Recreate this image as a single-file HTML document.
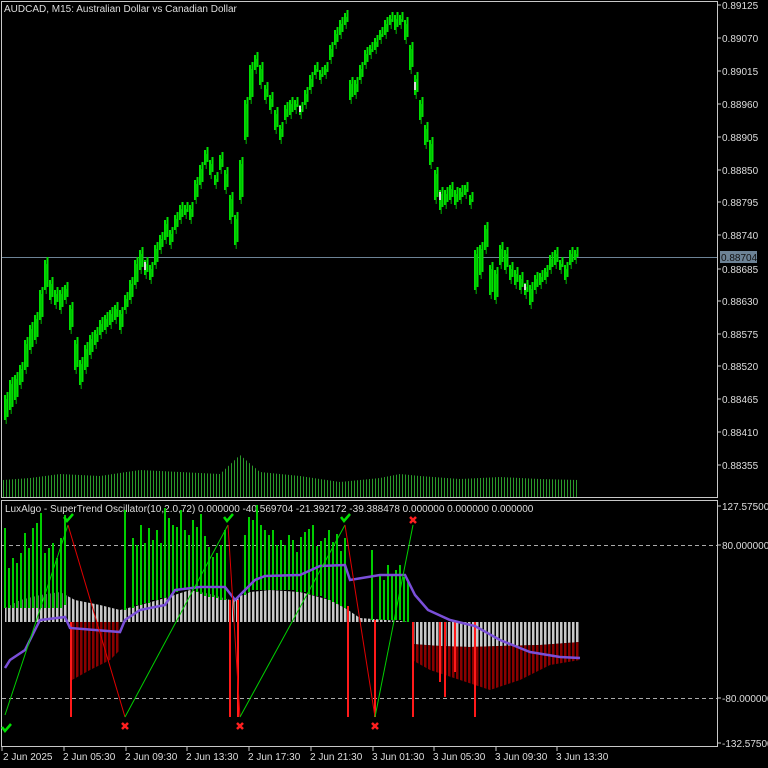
<!DOCTYPE html><html><head><style>body{margin:0;background:#000;width:768px;height:768px;overflow:hidden}svg{display:block}text{font-family:"Liberation Sans",sans-serif;font-size:10px;fill:#ddd}</style></head><body>
<svg width="768" height="768" viewBox="0 0 768 768">
<defs>
<pattern id="gs" width="4" height="10" patternUnits="userSpaceOnUse"><rect x="0" width="2.5" height="10" fill="#c8c8c8"/></pattern>
<pattern id="rs" width="4" height="10" patternUnits="userSpaceOnUse"><rect x="0" width="2.5" height="10" fill="#8b0000"/></pattern>
<pattern id="vs" width="3" height="10" patternUnits="userSpaceOnUse"><rect x="0" width="1" height="10" fill="#2a9a2a"/></pattern>
</defs>
<rect x="0" y="0" width="768" height="768" fill="#000"/>
<path d="M1.5 1.5H717.5V497.5H1.5Z M1.5 500.5H717.5V746.5H1.5Z" fill="none" stroke="#c8c8c8"/>
<line x1="2" y1="257.5" x2="717" y2="257.5" stroke="#6d8396"/>
<g stroke="#c8c8c8">
<path d="M717 5h4M717 38h4M717 71h4M717 104h4M717 137h4M717 170h4M717 202h4M717 235h4M717 269h4M717 301h4M717 334h4M717 366h4M717 399h4M717 432h4M717 465h4M717 506h4M717 545h4M717 698h4M717 743h4"/>
<path d="M2 747v4M64 747v4M126 747v4M187 747v4M249 747v4M311 747v4M373 747v4M434 747v4M496 747v4M557 747v4"/>
</g>
<g>
<text x="722" y="9">0.89125</text><text x="722" y="42">0.89070</text><text x="722" y="75">0.89015</text><text x="722" y="108">0.88960</text><text x="722" y="141">0.88905</text><text x="722" y="174">0.88850</text><text x="722" y="206">0.88795</text><text x="722" y="239">0.88740</text><text x="722" y="273">0.88685</text><text x="722" y="305">0.88630</text><text x="722" y="338">0.88575</text><text x="722" y="370">0.88520</text><text x="722" y="403">0.88465</text><text x="722" y="436">0.88410</text><text x="722" y="469">0.88355</text>
<text x="722" y="510">127.575000</text><text x="722" y="549">80.000000</text><text x="722" y="702">-80.000000</text><text x="722" y="747">-132.575000</text>
</g>
<rect x="720" y="251" width="37" height="12" fill="#6d8396"/><text x="721" y="261" style="fill:#111">0.88704</text>
<text x="4" y="12">AUDCAD, M15:  Australian Dollar vs Canadian Dollar</text>
<text x="5" y="512">LuxAlgo - SuperTrend Oscillator(10,2.0,72) 0.000000 -40.569704 -21.392172 -39.388478 0.000000 0.000000 0.000000</text>
<g><text x="3" y="760">2 Jun 2025</text><text x="63" y="760">2 Jun 05:30</text><text x="125" y="760">2 Jun 09:30</text><text x="186" y="760">2 Jun 13:30</text><text x="248" y="760">2 Jun 17:30</text><text x="310" y="760">2 Jun 21:30</text><text x="372" y="760">3 Jun 01:30</text><text x="433" y="760">3 Jun 05:30</text><text x="495" y="760">3 Jun 09:30</text><text x="556" y="760">3 Jun 13:30</text></g>
<path d="M3 497V480 L30 478 L60 474 L100 476 L140 470 L180 472 L220 474 L240 455 L260 472 L300 476 L340 482 L380 478 L400 474 L420 476 L460 479 L500 477 L540 479 L578 480 V497Z" fill="url(#vs)"/>
<g id="cg" stroke="#00e000" stroke-width="2" fill="none">
<path id="cp" d="M5 420v-25M10 410v-30M15 400v-25M20 385v-20M25 370v-30M30 350v-25M35 340v-25M40 320v-30M45 290v-30M50 300v-20M55 305v-15M60 310v-20M65 300v-15M70 330v-25M75 370v-30M80 385v-25M85 370v-25M90 355v-20M95 345v-15M100 335v-15M105 330v-15M110 325v-15M115 320v-15M120 330v-20M125 310v-15M130 300v-20M135 285v-25M140 270v-20M145 275v-15M150 280v-15M155 265v-20M160 250v-15M165 240v-20M170 245v-15M175 230v-15M180 220v-15M185 215v-10M190 220v-15M195 200v-20M200 185v-20M205 165v-15M210 175v-15M215 185v-10M220 170v-15M225 190v-20M230 220v-25M235 245v-30M240 200v-40M245 140v-40M250 100v-35M255 70v-15M260 85v-20M265 100v-15M270 110v-15M275 130v-20M280 140v-15M285 120v-15M290 115v-15M295 110v-10M300 115v-10M305 105v-15M310 90v-15M315 75v-10M320 80v-10M325 75v-10M330 60v-15M335 45v-15M340 35v-15M345 25v-12M350 100v-20M355 95v-15M360 80v-15M365 65v-15M370 55v-10M375 50v-12M380 40v-10M385 35v-15M390 25v-10M395 30v-15M400 25v-10M405 40v-20M410 70v-25M415 95v-20M420 120v-20M425 145v-20M430 165v-25M435 200v-30M440 210v-20M445 205v-15M450 200v-15M455 205v-15M460 200v-12M465 195v-10M470 205v-10M475 290v-40M480 275v-30M485 250v-25M490 295v-30M495 300v-30M500 265v-20M505 270v-20M510 280v-15M515 285v-15M520 290v-15M525 295v-12M530 305v-20M535 290v-15M540 285v-12M545 280v-12M550 270v-15M555 265v-15M560 270v-10M565 280v-15M570 265v-15M575 260v-10"/>
</g>
<use href="#cp" transform="translate(2.5,-3)" stroke="#00e000" stroke-width="2" fill="none"/>
<use href="#cp" transform="translate(1.2,4) scale(1,1)" stroke="#00b000" stroke-width="1" fill="none"/>
<g stroke="#ddd" stroke-width="2"><path d="M145 270v-8M300 112v-6M415 90v-8M440 200v-8M525 290v-6"/></g>
<line x1="2" y1="545.5" x2="717" y2="545.5" stroke="#aaa" stroke-dasharray="4,3"/>
<line x1="2" y1="698.5" x2="717" y2="698.5" stroke="#aaa" stroke-dasharray="4,3"/>
<path d="M5 622V608 L20 600 L40 595 L60 592 L75 600 L100 605 L120 610 L140 605 L165 598 L190 590 L210 594 L230 600 L250 592 L270 590 L300 592 L330 600 L345 608 L360 618 L400 621 L410 622Z" fill="url(#gs)"/>
<path d="M412 622V644 L440 646 L470 647 L500 646 L540 645 L580 642 V622Z" fill="url(#gs)"/>
<path d="M412 644 L440 646 L470 647 L500 646 L540 645 L580 642 V660 L550 665 L520 680 L490 690 L460 680 L430 670 L412 660Z" fill="url(#rs)"/>
<path d="M72 622V680 L90 670 L110 660 L120 650 L120 622Z" fill="url(#rs)"/>
<g stroke="#00cc00" stroke-width="2">
<path d="M5 608v-80M9 608v-40M13 608v-50M17 608v-45M21 608v-55M25 608v-75M29 608v-60M33 608v-80M37 608v-85M41 608v-95M45 608v-55M49 608v-60M53 608v-65M57 608v-50M61 608v-70M65 605v-90M125 610v-100M133 608v-70M137 605v-60M141 605v-80M145 603v-60M149 603v-75M153 600v-60M157 600v-70M161 598v-55M165 598v-90M169 598v-80M173 595v-70M177 592v-65M181 590v-80M185 590v-60M189 590v-55M193 590v-70M197 592v-65M201 594v-80M205 596v-60M209 597v-50M213 597v-40M217 598v-45M221 600v-55M225 600v-70M245 595v-60M249 592v-75M253 590v-70M257 590v-85M261 590v-65M265 590v-60M269 590v-55M273 590v-60M277 590v-45M281 590v-50M285 590v-45M289 590v-55M293 590v-50M297 592v-40M301 592v-55M305 592v-60M309 594v-65M313 595v-70M317 596v-50M321 596v-55M325 598v-60M329 600v-70M333 602v-60M337 604v-70M341 606v-55M345 608v-70M372 620v-70M380 620v-45M384 620v-40M388 620v-55M392 620v-45M396 620v-50M400 620v-55M404 622v-45M408 622v-40"/>
</g>
<g stroke="#ff1a1a" stroke-width="2"><path d="M71 622v95M230 600v117M238 600v117M348 606v111M375 620v97M413 622v95M440 622v60M445 622v75M455 622v50M475 622v95"/></g>
<polyline points="5,668 10,660 25,650 35,630 40,620 65,617 70,628 120,632 125,620 140,610 165,605 175,590 200,587 225,587 235,600 240,595 255,580 265,576 300,575 320,566 345,565 350,580 380,575 405,575 415,595 428,610 450,620 475,626 500,640 530,652 560,657 580,658" fill="none" stroke="#7a4fd8" stroke-width="2.5"/>
<polyline points="5,715 68,525" fill="none" stroke="#00d000"/>
<polyline points="68,525 125,717" fill="none" stroke="#e00000"/>
<polyline points="125,717 228,525" fill="none" stroke="#00d000"/>
<polyline points="228,525 240,717" fill="none" stroke="#e00000"/>
<polyline points="240,717 345,525" fill="none" stroke="#00d000"/>
<polyline points="345,525 375,717" fill="none" stroke="#e00000"/>
<polyline points="375,717 413,525" fill="none" stroke="#00d000"/>
<g stroke="#00e000" stroke-width="2.5" fill="none"><path d="M64 517l3 4l6 -7M224 517l3 4l6 -7M341 517l3 4l6 -7M2 727l3 4l6 -7"/></g>
<g stroke="#ff2020" stroke-width="2.5"><path d="M122 723l6 6M128 723l-6 6M237 723l6 6M243 723l-6 6M372 723l6 6M378 723l-6 6M410 517l6 6M416 517l-6 6"/></g>
</svg>
</body></html>
